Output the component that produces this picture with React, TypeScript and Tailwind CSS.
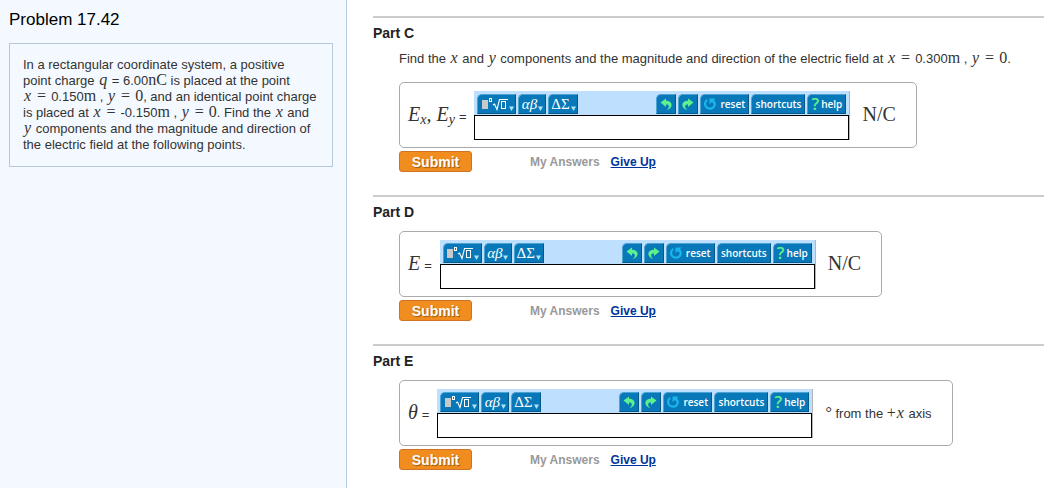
import React from 'react';

const Var = ({ children }: { children: React.ReactNode }) => (
    <i className="px-px font-['Liberation_Serif',serif] text-[16px] leading-[0]">{children}</i>
);

const Roman = ({ children }: { children: React.ReactNode }) => (
    <span className="font-['Liberation_Serif',serif] text-[16px] leading-[0]">{children}</span>
);

const Eq = () => (
    <span className="mx-[5px] font-['Liberation_Serif',serif] text-[16px] leading-[0]">=</span>
);

// Dropdown marker in the corner of the palette buttons
const Caret = () => (
    <svg className="mt-2 h-[5px] w-[5px] shrink-0" viewBox="0 0 5 5">
        <path d="M0 0.500h5L2.500 5z" fill="#a9e4fb" />
    </svg>
);

const TemplateIcon = () => (
    <svg className="h-4 w-[29px] shrink-0" viewBox="0 0 29 16">
        <rect x="2" y="4" width="6" height="9" fill="#c9c9c9" />
        <rect x="9.500" y="2.500" width="2" height="3" fill="none" stroke="#fff" />
        <path d="M13 9l1.500-1 2.500 5.500L19.500 3.500H28" fill="none" stroke="#fff" strokeWidth="1.100" />
        <rect x="21.500" y="5.500" width="4" height="7" fill="none" stroke="#fff" />
    </svg>
);

const ArrowIcon = ({ flip = false }: { flip?: boolean }) => (
    <svg className={flip ? 'h-3.5 w-3.5 -scale-x-100' : 'h-3.5 w-3.5'} viewBox="0 0 14 14">
        <path d="M1.500 5.500L7 1.500v2.300c3.200.1 5.600 1.500 5.600 4.100 0 2.300-1.800 4.200-4.800 5.100 1.500-1.400 2.300-2.700 2-3.900-.3-1.100-1.300-1.500-2.800-1.500v2.300z" fill="#5df08f" />
    </svg>
);

const ResetIcon = () => (
    <svg className="h-3 w-3 shrink-0" viewBox="0 0 12 12">
        <path d="M3.200 1.800C.6 3.600.4 7.200 2.500 9.300c2.100 2 5.600 1.800 7.300-.5.9-1.200 1.100-2.500.8-3.800" fill="none" stroke="#19b5ee" strokeWidth="2.200" />
        <path d="M5.500 6.200V.4h6L10 2l1.800 3-2 1L8 4z" fill="#19b5ee" />
    </svg>
);

const toolButton =
    "flex h-5 shrink-0 cursor-pointer items-center rounded-tl-[5px] border border-t-[#4ba3d3] border-l-[#4ba3d3] border-r-[#04588c] border-b-[#04588c] bg-[#0878b8] font-['Open_Sans',sans-serif] text-[10px] leading-3 font-semibold text-white";
const greek = "font-['Liberation_Serif',serif] text-[15px] leading-4 font-normal";

const EquationEditor = ({ label }: { label: string }) => (
    <div className="w-[376px] shrink-0 border-r border-[#b5b5b5]">
        <div className="flex h-6 items-start gap-0.5 bg-[#bfdfff] px-[3px] pt-[3px]">
            <button className={`${toolButton} w-[39px] justify-center`} aria-label="Templates">
                <TemplateIcon />
                <Caret />
            </button>
            <button className={`${toolButton} w-7 justify-center gap-px`}>
                <i className={greek}>αβ</i>
                <Caret />
            </button>
            <button className={`${toolButton} w-[30px] justify-center gap-px`}>
                <span className={greek}>ΔΣ</span>
                <Caret />
            </button>
            <div className="grow" />
            <button className={`${toolButton} w-5 justify-center`} aria-label="Undo">
                <ArrowIcon />
            </button>
            <button className={`${toolButton} w-5 justify-center`} aria-label="Redo">
                <ArrowIcon flip />
            </button>
            <button className={`${toolButton} w-[49px] gap-1 pl-[3px]`}>
                <ResetIcon />
                reset
            </button>
            <button className={`${toolButton} w-[54px] justify-center`}>shortcuts</button>
            <button className={`${toolButton} w-[39px] gap-0.5 pl-[3px]`}>
                <span className="text-[17px] text-[#5df08f]">?</span>
                help
            </button>
        </div>
        <input
            type="text"
            aria-label={label}
            className="block h-[25px] w-full border border-black bg-white px-1 text-sm outline-none"
        />
    </div>
);

interface PartProps {
    title: string;
    name: string;
    symbol: React.ReactNode;
    unit: React.ReactNode;
    children?: React.ReactNode;
}

const Part = ({ title, name, symbol, unit, children }: PartProps) => (
    <section className="mb-[23px] border-t-2 border-[#cccccc] pt-[7px]">
        <h2 className="text-sm leading-4 font-bold text-[#222]">{title}</h2>
        <div className="pl-[26px]">
            {children}
            <div className="mt-[11px] flex w-fit items-center rounded-[5px] border border-[#aaa] pt-2 pr-5 pb-[7px] pl-2">
                <div className="mr-2 flex items-baseline gap-1 pb-1 whitespace-nowrap">
                    {symbol}
                    <span>=</span>
                </div>
                <EquationEditor label={name} />
                <div className="ml-3 whitespace-nowrap">{unit}</div>
            </div>
            <div className="mt-[3px] flex items-center text-xs font-bold">
                <button className="h-[21px] w-[73px] cursor-pointer rounded-[3px] border border-[#cf7426] bg-[#f18d1e] text-sm leading-4 text-white [text-shadow:1px_1px_1px_#9a5a10]">
                    Submit
                </button>
                <span className="ml-[58px] text-[#999]">My Answers</span>
                <a href="#give-up" className="ml-[11px] text-[#003399] underline">
                    Give Up
                </a>
            </div>
        </div>
    </section>
);

const Symbol = ({ children }: { children: React.ReactNode }) => (
    <span className="font-['Liberation_Serif',serif] text-[20px] leading-6 italic">{children}</span>
);

const Sub = ({ children }: { children: React.ReactNode }) => (
    <sub className="text-[14px]">{children}</sub>
);

export default function App() {
    return (
        <div className="flex min-h-screen bg-white font-['Liberation_Sans',sans-serif] text-[13px] leading-4 text-[#333]">
            <aside className="w-1/3 max-w-[347px] min-w-[347px] border-r border-[#b8cbdc] bg-[#f4f9ff] px-[9px] pt-[10px]">
                <h1 className="text-[17px] leading-5 text-black">Problem 17.42</h1>
                <div className="mt-[13px] mr-1 border border-[#b5c9da] p-[13px] pr-2">
                    <p>
                        In a rectangular coordinate system, a positive
                        <br />
                        point charge <Var>q</Var> = 6.00<Roman>nC</Roman> is placed at the point
                        <br />
                        <Var>x</Var><Eq />0.150<Roman>m</Roman> , <Var>y</Var><Eq /><Roman>0</Roman>, and an identical point charge
                        <br />
                        is placed at <Var>x</Var><Eq />-0.150<Roman>m</Roman> , <Var>y</Var><Eq /><Roman>0</Roman>. Find the <Var>x</Var> and
                        <br />
                        <Var>y</Var> components and the magnitude and direction of
                        <br />
                        the electric field at the following points.
                    </p>
                </div>
            </aside>

            <main className="min-w-0 grow pt-4 pl-[26px]">
                <Part
                    title="Part C"
                    name="Ex, Ey"
                    symbol={<Symbol>E<Sub>x</Sub>, E<Sub>y</Sub></Symbol>}
                    unit={<span className="font-['Liberation_Serif',serif] text-[20px]">N/C</span>}
                >
                    <p className="mt-[10px] mb-[15px]">
                        Find the <Var>x</Var> and <Var>y</Var> components and the magnitude and direction of the electric field at{' '}
                        <Var>x</Var><Eq />0.300<Roman>m</Roman> , <Var>y</Var><Eq /><Roman>0</Roman>.
                    </p>
                </Part>
                <Part
                    title="Part D"
                    name="E"
                    symbol={<Symbol>E</Symbol>}
                    unit={<span className="font-['Liberation_Serif',serif] text-[20px]">N/C</span>}
                />
                <Part
                    title="Part E"
                    name="Theta"
                    symbol={<Symbol>θ</Symbol>}
                    unit={<><Roman>°</Roman> from the <Roman>+</Roman><Var>x</Var> axis</>}
                />
            </main>
        </div>
    );
}
